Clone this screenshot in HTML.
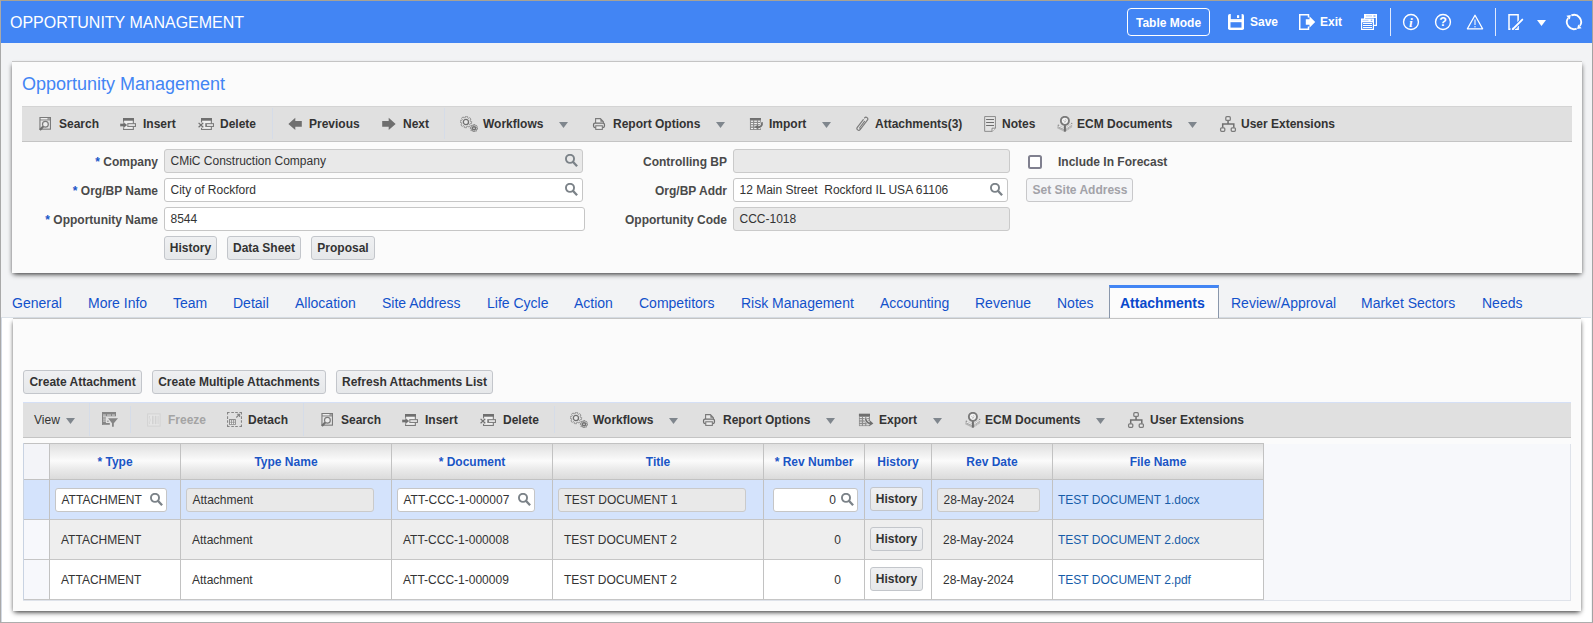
<!DOCTYPE html>
<html lang="en">
<head>
<meta charset="utf-8">
<title>Opportunity Management</title>
<style>
*{box-sizing:border-box;margin:0;padding:0}
html,body{width:1593px;height:623px;overflow:hidden}
body{position:relative;background:#f2f3f5;font-family:"Liberation Sans",sans-serif;font-size:12px;color:#333}
.abs{position:absolute}
#frame{position:absolute;left:0;top:0;width:1593px;height:623px;border-left:1px solid #a9a9a9;border-top:1px solid #a8a294;border-right:1px solid #a3a3a3;border-bottom:1px solid #adadad;pointer-events:none;z-index:50}
#hdr{position:absolute;left:0;top:0;width:1593px;height:43px;background:#4285f4;color:#fff}
#hdr .ttl{position:absolute;left:10px;top:14px;font-size:16px;line-height:18px;white-space:nowrap}
.hb{position:absolute;font-weight:bold;font-size:12px;line-height:14px;color:#fff;white-space:nowrap}
.panel{position:absolute;background:#fbfbfb;border-top:1px solid #c4c4c4;box-shadow:0 3px 5px -1px rgba(0,0,0,.45),-2px 2px 4px -2px rgba(0,0,0,.35),2px 2px 4px -2px rgba(0,0,0,.35)}
.tb{position:absolute;background:#e0e0e0;height:36px;border-bottom:1px solid #c4c4c4;border-top:1px solid #d4d4d4}
.t{position:absolute;line-height:14px;font-size:12px;white-space:nowrap;color:#333}
b.t{font-weight:bold}
.sep{position:absolute;width:1px;background:#d5dce8}
.lbl{position:absolute;font-weight:bold;font-size:12px;line-height:14px;text-align:right;white-space:nowrap;color:#4a4a4a}
.lbl i{font-style:normal;color:#1a56c8}
.fld{position:absolute;height:24px;border:1px solid #c6c6c6;border-radius:3px;background:#fff;font-size:12px;line-height:23px;padding-left:5.5px;white-space:pre;color:#333;overflow:hidden}
.fld.ro{background:#e9e9e9;border-color:#cacaca}
.btn{position:absolute;height:24px;border:1px solid #c3c6cb;border-radius:3px;background:linear-gradient(#eff0f2,#e6e8ea);font-weight:bold;font-size:12px;line-height:23px;text-align:center;white-space:nowrap;color:#333}
.btn.dis{color:#a2a2a8;background:#f4f5f7;border-color:#c8c8ca;padding-left:1px}
.tab{position:absolute;top:295px;font-size:14px;line-height:16px;color:#1251cb;white-space:nowrap}
.th{position:absolute;top:443px;height:37px;border:1px solid #c2c2c2;border-left:none;background:linear-gradient(#dfdfdf 0%,#ececec 22%,#fbfbfb 48%,#eaeaea 72%,#dbdbdb 100%);font-weight:bold;font-size:12px;line-height:36px;text-align:center;color:#1a55c5;white-space:nowrap}
.td{position:absolute;height:40px;border-right:1px solid #c2c2c2;border-bottom:1px solid #c6c6c6;font-size:12px;line-height:41px;padding-left:11px;white-space:nowrap;color:#333}
.lnk{color:#165ca8}
</style>
</head>
<body>

<div id="hdr"><div class="ttl">OPPORTUNITY MANAGEMENT</div>
<div class="abs" style="left:1127px;top:8px;width:83px;height:28px;border:1px solid #fff;border-radius:4px"></div>
<div class="hb" style="left:1136px;top:16px">Table Mode</div>
<svg class="abs" style="left:1228px;top:14px" width="16" height="16" viewBox="0 0 16 16" ><rect x="0" y="0" width="16" height="16" rx="1.8" fill="#fff"/><rect x="2.8" y="0" width="10.8" height="5" fill="#4285f4"/><rect x="9" y="1.2" width="2.2" height="2.8" fill="#fff"/><rect x="2.8" y="5" width="10.8" height="1.4" fill="#e4edfd"/><rect x="2.5" y="8.2" width="11" height="5.4" fill="#4285f4"/></svg>
<div class="hb" style="left:1250px;top:15px">Save</div>
<svg class="abs" style="left:1299px;top:14px" width="17" height="16" viewBox="0 0 17 16" ><path d="M9.5 3.5V0.75H0.75v14.5H9.5V12.5" fill="none" stroke="#fff" stroke-width="1.5"/><path d="M6.8 5.3h3.7V2.2l5.7 5.8-5.7 5.8V10.7H6.8z" fill="#fff"/></svg>
<div class="hb" style="left:1320px;top:15px">Exit</div>
<svg class="abs" style="left:1361px;top:14px" width="16" height="16" viewBox="0 0 16 16" ><rect x="3.6" y="0.6" width="11.8" height="10.8" fill="#4285f4" stroke="#fff" stroke-width="1.2"/><rect x="3" y="0" width="13" height="4" fill="#fff"/><rect x="5" y="1.3" width="6" height="1.2" fill="#bcd3fb"/><rect x="12.5" y="1" width="2" height="2" fill="#a9c6fa"/><rect x="0.6" y="5.3" width="11.8" height="10.1" fill="#4285f4" stroke="#fff" stroke-width="1.2"/><rect x="0" y="4.7" width="13" height="3.6" fill="#fff"/><rect x="1.5" y="5.8" width="6" height="1.1" fill="#bcd3fb"/><rect x="9.8" y="5.6" width="1.5" height="1.5" fill="#8ab1f8"/><path d="M2 9.5h9M2 11.5h9M2 13.5h9" stroke="#fff" stroke-width="1"/></svg>
<div class="abs" style="left:1390px;top:8px;width:1px;height:28px;background:#dfe9fd"></div>
<svg class="abs" style="left:1402px;top:13px" width="18" height="18" viewBox="0 0 18 18" ><circle cx="9" cy="9" r="7.45" fill="none" stroke="#fff" stroke-width="1.4"/><text x="9" y="13.6" text-anchor="middle" font-family="Liberation Serif,serif" font-style="italic" font-weight="bold" font-size="13.5" fill="#fff">i</text></svg>
<svg class="abs" style="left:1434px;top:13px" width="18" height="18" viewBox="0 0 18 18" ><circle cx="9" cy="9" r="7.45" fill="none" stroke="#fff" stroke-width="1.4"/><text x="9" y="13.4" text-anchor="middle" font-family="Liberation Sans,sans-serif" font-weight="bold" font-size="12.5" fill="#fff">?</text></svg>
<svg class="abs" style="left:1466px;top:14px" width="18" height="16" viewBox="0 0 18 16" ><path d="M9 1.2L16.6 14.8H1.4z" fill="none" stroke="#fff" stroke-width="1.3" stroke-linejoin="round"/><path d="M9 5.5v5.5" stroke="#fff" stroke-width="1.3" opacity=".85"/><circle cx="9" cy="12.7" r="0.8" fill="#fff" opacity=".85"/></svg>
<div class="abs" style="left:1495px;top:8px;width:1px;height:28px;background:#dfe9fd"></div>
<svg class="abs" style="left:1508px;top:14px" width="16" height="16" viewBox="0 0 16 16" ><path d="M10.1 8V0.75H1V15.15H4.2M6.8 15.15H10.1V12" fill="none" stroke="#fff" stroke-width="1.5"/><path d="M14.3 5.6L4.3 15.6" stroke="#4285f4" stroke-width="3.6" stroke-linecap="round"/><path d="M14.3 5.6L5.3 14.6" stroke="#fff" stroke-width="1.9" stroke-linecap="round"/><path d="M3.8 16.1l0.7-2.5 1.8 1.8z" fill="#fff"/></svg>
<svg class="abs" style="left:1537px;top:20px" width="9" height="6" viewBox="0 0 9 6" ><path d="M0 0h9L4.5 6z" fill="#fff"/></svg>
<svg class="abs" style="left:1565px;top:13px" width="18" height="18" viewBox="0 0 18 18" ><path d="M11.66 15.58A7.1 7.1 0 0 1 3.18 4.93M6.34 2.42A7.1 7.1 0 0 1 14.82 13.07" fill="none" stroke="#fff" stroke-width="1.8"/><path d="M1.4 2.65L5.9 2.1 4.8 6.6z" fill="#fff"/><path d="M16.6 15.35L12.1 15.9 13.2 11.4z" fill="#fff"/></svg>
</div>
<div class="panel" style="left:12px;top:61px;width:1570px;height:212px"></div>
<div class="abs" style="left:22px;top:73px;font-size:18px;line-height:22px;color:#4285f4;white-space:nowrap">Opportunity Management</div>
<div class="tb" style="left:22px;top:106px;width:1550px"></div>
<svg class="abs" style="left:38px;top:116px" width="14" height="15" viewBox="0 0 14 15" ><rect x="1.95" y="1.55" width="10.5" height="11.6" fill="#e4e4e4" stroke="#7a7a7a" stroke-width="1.1"/><line x1="2" y1="3.9" x2="12.5" y2="3.9" stroke="#7a7a7a" stroke-width="1"/><rect x="3" y="2.3" width="6" height="0.9" fill="#f6f6f6"/><rect x="9.6" y="2.2" width="2.3" height="1.2" fill="#8c8c8c"/><circle cx="7.4" cy="8.3" r="2.9" fill="#ececec" stroke="#7a7a7a" stroke-width="1.2"/><line x1="5.2" y1="10.6" x2="1.9" y2="14" stroke="#6f6f6f" stroke-width="2.2"/></svg><b class="t" style="left:59px;top:117px">Search</b>
<svg class="abs" style="left:120px;top:118px" width="16" height="12" viewBox="0 0 16 12" ><rect x="3.55" y="0.55" width="9.8" height="10.9" fill="#efefef" stroke="#7a7a7a" stroke-width="1.1"/><rect x="3" y="0" width="10.9" height="2.7" fill="#6f6f6f"/><rect x="7.8" y="5.7" width="7.7" height="2.7" fill="#f2f2f2" stroke="#7a7a7a" stroke-width="1.1"/><path d="M0 5.5h3.3V3.9L7.4 7.05 3.3 10.2V8.6H0z" fill="#6f6f6f" stroke="#e0e0e0" stroke-width="0.4"/></svg><b class="t" style="left:143px;top:117px">Insert</b>
<svg class="abs" style="left:198px;top:118px" width="16" height="12" viewBox="0 0 16 12" ><rect x="3.55" y="0.55" width="9.8" height="10.9" fill="#efefef" stroke="#7a7a7a" stroke-width="1.1"/><rect x="3" y="0" width="10.9" height="2.7" fill="#6f6f6f"/><rect x="7.8" y="5.7" width="7.7" height="2.7" fill="#f2f2f2" stroke="#7a7a7a" stroke-width="1.1"/><rect x="2.5" y="4.4" width="3.6" height="5.4" fill="#e0e0e0"/><path d="M0.6 4.9l4.6 4.4M5.2 4.9l-4.6 4.4" stroke="#6f6f6f" stroke-width="1.2" fill="none"/><path d="M8.5 6.2v1.8" stroke="#7a7a7a" stroke-width="1"/></svg><b class="t" style="left:220px;top:117px">Delete</b>
<div class="sep" style="left:272px;top:108px;height:31px"></div>
<svg class="abs" style="left:288px;top:117px" width="15" height="14" viewBox="0 0 15 14" ><path d="M0.35 6.94L7.3 0.8V4.05H13.8V9.8H7.3V13.1z" fill="#6f6f6f"/></svg><b class="t" style="left:309px;top:117px">Previous</b>
<svg class="abs" style="left:381px;top:117px" width="16" height="14" viewBox="0 0 16 14" ><path d="M14.65 6.94L7.7 0.8V4.05H1.2V9.8H7.7V13.1z" fill="#6f6f6f"/></svg><b class="t" style="left:403px;top:117px">Next</b>
<div class="sep" style="left:444px;top:108px;height:31px"></div>
<svg class="abs" style="left:460px;top:116px" width="18" height="16" viewBox="0 0 18 16" ><path d="M11.71 5.43 L11.49 7.68 L10.34 7.34 L9.5 8.92 L10.42 9.68 L8.67 11.12 L8.11 10.06 L6.39 10.58 L6.51 11.77 L4.26 11.55 L4.6 10.4 L3.02 9.56 L2.26 10.48 L0.82 8.73 L1.88 8.17 L1.36 6.45 L0.17 6.57 L0.39 4.32 L1.54 4.66 L2.38 3.08 L1.46 2.32 L3.21 0.88 L3.77 1.94 L5.49 1.42 L5.37 0.23 L7.62 0.45 L7.28 1.6 L8.86 2.44 L9.62 1.52 L11.06 3.27 L10 3.83 L10.52 5.55Z" fill="#e3e3e3" stroke="#8a8a8a" stroke-width="0.8" stroke-linejoin="round"/><circle cx="5.94" cy="6" r="2.6" fill="#e8e8e8" stroke="#6f6f6f" stroke-width="1.3"/><path d="M17.68 11.84 L17.54 13.27 L16.68 13.01 L16.16 13.98 L16.86 14.55 L15.74 15.46 L15.32 14.67 L14.27 14.99 L14.36 15.88 L12.93 15.74 L13.19 14.88 L12.22 14.36 L11.65 15.06 L10.74 13.94 L11.53 13.52 L11.21 12.47 L10.32 12.56 L10.46 11.13 L11.32 11.39 L11.84 10.42 L11.14 9.85 L12.26 8.94 L12.68 9.73 L13.73 9.41 L13.64 8.52 L15.07 8.66 L14.81 9.52 L15.78 10.04 L16.35 9.34 L17.26 10.46 L16.47 10.88 L16.79 11.93Z" fill="#e3e3e3" stroke="#7a7a7a" stroke-width="0.8" stroke-linejoin="round"/><circle cx="14" cy="12.2" r="1.5" fill="#f6f6f6" stroke="#6f6f6f" stroke-width="1.5"/></svg><b class="t" style="left:483px;top:117px">Workflows</b><svg class="abs" style="left:559px;top:122px" width="9" height="6" viewBox="0 0 9 6"><path d="M0 0h9L4.5 6z" fill="#7f868d"/></svg>
<svg class="abs" style="left:592px;top:118px" width="14" height="12" viewBox="0 0 14 12" ><path d="M3.6 5V0.6H8.4L11.4 3.8V5" fill="#e9e9e9" stroke="#7a7a7a" stroke-width="1.1"/><path d="M8.4 0.6V3.8H11.4z" fill="#7a7a7a"/><rect x="1.55" y="5.2" width="10.9" height="4.3" rx="1.4" fill="#e0e0e0" stroke="#6f6f6f" stroke-width="1.25"/><rect x="3.75" y="7.8" width="6.6" height="3.6" fill="#eeeeee" stroke="#7a7a7a" stroke-width="1.1"/></svg><b class="t" style="left:613px;top:117px">Report Options</b><svg class="abs" style="left:716px;top:122px" width="9" height="6" viewBox="0 0 9 6"><path d="M0 0h9L4.5 6z" fill="#7f868d"/></svg>
<svg class="abs" style="left:749px;top:118px" width="15" height="13" viewBox="0 0 15 13" ><rect x="0.95" y="0" width="11" height="12" fill="#8c8c8c"/><rect x="0.95" y="0" width="11" height="1.8" fill="#6f6f6f"/><rect x="1.95" y="2.7" width="2.1" height="1.15" fill="#f4f4f4"/><rect x="5.2" y="2.7" width="2.7" height="1.15" fill="#f4f4f4"/><rect x="9.05" y="2.7" width="2.1" height="1.15" fill="#f4f4f4"/><rect x="1.95" y="5" width="2.1" height="1.15" fill="#f4f4f4"/><rect x="5.2" y="5" width="2.7" height="1.15" fill="#f4f4f4"/><rect x="9.05" y="5" width="2.1" height="1.15" fill="#f4f4f4"/><rect x="1.95" y="7.3" width="2.1" height="1.15" fill="#f4f4f4"/><rect x="5.2" y="7.3" width="2.7" height="1.15" fill="#f4f4f4"/><rect x="9.05" y="7.3" width="2.1" height="1.15" fill="#f4f4f4"/><rect x="1.95" y="9.9" width="2.1" height="1.15" fill="#f4f4f4"/><rect x="5.2" y="9.9" width="2.7" height="1.15" fill="#f4f4f4"/><rect x="9.05" y="9.9" width="2.1" height="1.15" fill="#f4f4f4"/><path d="M12.9 4.2C13.7 7.8 11.2 9.5 7.5 9.2" fill="none" stroke="#e0e0e0" stroke-width="3.4"/><path d="M12.9 4.2C13.7 7.8 11.2 9.5 8.5 9.2" fill="none" stroke="#6f6f6f" stroke-width="1.8"/><path d="M9.2 6.6L5.6 8.9 9.2 11.6z" fill="#6f6f6f"/></svg><b class="t" style="left:769px;top:117px">Import</b><svg class="abs" style="left:822px;top:122px" width="9" height="6" viewBox="0 0 9 6"><path d="M0 0h9L4.5 6z" fill="#7f868d"/></svg>
<svg class="abs" style="left:855px;top:116px" width="14" height="16" viewBox="0 0 14 16" ><path d="M9.61 1.93A1.75 1.75 0 0 1 12.39 4.07L5.09 13.57A1.75 1.75 0 0 1 2.31 11.43L8.3 3.65" fill="none" stroke="#7a7a7a" stroke-width="1.15" stroke-linecap="round"/><path d="M9.5 5.4L4.7 11.7A0.8 0.8 0 0 0 5.7 12.6" fill="none" stroke="#7a7a7a" stroke-width="1.05" stroke-linecap="round"/></svg><b class="t" style="left:875px;top:117px">Attachments(3)</b>
<svg class="abs" style="left:984px;top:116px" width="12" height="16" viewBox="0 0 12 16" ><path d="M0.65 0.55H11.45V12.2L8 15.35H0.65z" fill="#e4e4e4" stroke="#828282" stroke-width="0.9" stroke-linejoin="miter"/><path d="M8 15.35V12.2H11.45" fill="#f2f2f2" stroke="#828282" stroke-width="0.9"/><path d="M2.1 3.5h7.9M2.1 6.5h7.9M2.1 9.5h7.9" stroke="#6f6f6f" stroke-width="1.2" fill="none"/></svg><b class="t" style="left:1002px;top:117px">Notes</b>
<svg class="abs" style="left:1057px;top:116px" width="16" height="16" viewBox="0 0 16 16" ><path d="M0.2 12.3L1 9.1 7.9 12V15.9z" fill="#a6a6a6"/><path d="M7.9 12L15.1 7.1V11.3L7.9 15.9z" fill="#adadad"/><path d="M0.7 11.5L7.7 14.6M0.5 12.7L7.7 15.6" fill="none" stroke="#dadada" stroke-width="0.6" stroke-dasharray="1.2 0.9"/><path d="M8.2 14.3L15 9.9M8.2 15.3L15 10.9" fill="none" stroke="#dedede" stroke-width="0.6" stroke-dasharray="1.2 0.9"/><path d="M1.3 9.95L7.6 12.7" stroke="#f6f6f6" stroke-width="0.9"/><path d="M8.4 12.6L14.9 8.1" stroke="#f6f6f6" stroke-width="0.9"/><circle cx="1.3" cy="9.2" r="0.6" fill="#7a7a7a"/><circle cx="14.7" cy="7.3" r="0.6" fill="#7a7a7a"/><path d="M7.9 8.5V15.6" stroke="#6f6f6f" stroke-width="2"/><circle cx="7.9" cy="4.86" r="4.05" fill="#f3f3f3" stroke="#7a7a7a" stroke-width="1.9"/><path d="M6.6 4.3l1.2 1.2M8.3 3.6l1 0.8M7.4 6.2l1.4-0.6" stroke="#9a9a9a" stroke-width="0.8"/></svg><b class="t" style="left:1077px;top:117px">ECM Documents</b><svg class="abs" style="left:1188px;top:122px" width="9" height="6" viewBox="0 0 9 6"><path d="M0 0h9L4.5 6z" fill="#7f868d"/></svg>
<svg class="abs" style="left:1219px;top:116px" width="18" height="16" viewBox="0 0 18 16" ><rect x="6.8" y="0.65" width="4.5" height="3.8" rx="1" fill="#e8e8e8" stroke="#7a7a7a" stroke-width="1.25"/><rect x="1.6" y="11.8" width="4.2" height="3.5" rx="1" fill="#e8e8e8" stroke="#7a7a7a" stroke-width="1.25"/><rect x="12.2" y="11.8" width="4.2" height="3.5" rx="1" fill="#e8e8e8" stroke="#7a7a7a" stroke-width="1.25"/><path d="M9.05 5V7.5M3.7 11.4V7.95H14.8V11.4" fill="none" stroke="#6f6f6f" stroke-width="1.5"/></svg><b class="t" style="left:1241px;top:117px">User Extensions</b>
<div class="lbl" style="left:-42px;width:200px;top:155px"><i>* </i>Company</div>
<div class="lbl" style="left:-42px;width:200px;top:184px"><i>* </i>Org/BP Name</div>
<div class="lbl" style="left:-42px;width:200px;top:213px"><i>* </i>Opportunity Name</div>
<div class="fld ro" style="left:164px;top:149px;width:419px">CMiC Construction Company</div><svg class="abs" style="left:565px;top:154px" width="14" height="14" viewBox="0 0 14 14" ><circle cx="5" cy="4.85" r="4.05" fill="none" stroke="#7b8288" stroke-width="1.9"/><line x1="7.9" y1="7.8" x2="12.1" y2="12.2" stroke="#7b8288" stroke-width="2.3"/></svg>
<div class="fld" style="left:164px;top:178px;width:419px">City of Rockford</div><svg class="abs" style="left:565px;top:183px" width="14" height="14" viewBox="0 0 14 14" ><circle cx="5" cy="4.85" r="4.05" fill="none" stroke="#7b8288" stroke-width="1.9"/><line x1="7.9" y1="7.8" x2="12.1" y2="12.2" stroke="#7b8288" stroke-width="2.3"/></svg>
<div class="fld" style="left:164px;top:207px;width:421px">8544</div>
<div class="btn" style="left:164px;top:236px;width:53px">History</div>
<div class="btn" style="left:227px;top:236px;width:74px">Data Sheet</div>
<div class="btn" style="left:311px;top:236px;width:64px">Proposal</div>
<div class="lbl" style="left:527px;width:200px;top:155px">Controlling BP</div>
<div class="lbl" style="left:527px;width:200px;top:184px">Org/BP Addr</div>
<div class="lbl" style="left:527px;width:200px;top:213px">Opportunity Code</div>
<div class="fld ro" style="left:733px;top:149px;width:277px"></div>
<div class="fld" style="left:733px;top:178px;width:275px">12 Main Street  Rockford IL USA 61106</div><svg class="abs" style="left:990px;top:183px" width="14" height="14" viewBox="0 0 14 14" ><circle cx="5" cy="4.85" r="4.05" fill="none" stroke="#7b8288" stroke-width="1.9"/><line x1="7.9" y1="7.8" x2="12.1" y2="12.2" stroke="#7b8288" stroke-width="2.3"/></svg>
<div class="fld ro" style="left:733px;top:207px;width:277px">CCC-1018</div>
<div class="abs" style="left:1028px;top:155px;width:14px;height:14px;border:2px solid #80808f;border-radius:2.5px;background:#fff"></div>
<div class="lbl" style="left:1058px;top:155px;text-align:left">Include In Forecast</div>
<div class="btn dis" style="left:1026px;top:178px;width:107px">Set Site Address</div>
<div class="abs" style="left:1px;top:317px;width:1590px;height:305px;background:#fff;border-top:1px solid #dbe1e8;border-left:1px solid #d3dae4"></div>
<div class="tab" style="left:12px">General</div>
<div class="tab" style="left:88px">More Info</div>
<div class="tab" style="left:173px">Team</div>
<div class="tab" style="left:233px">Detail</div>
<div class="tab" style="left:295px">Allocation</div>
<div class="tab" style="left:382px">Site Address</div>
<div class="tab" style="left:487px">Life Cycle</div>
<div class="tab" style="left:574px">Action</div>
<div class="tab" style="left:639px">Competitors</div>
<div class="tab" style="left:741px">Risk Management</div>
<div class="tab" style="left:880px">Accounting</div>
<div class="tab" style="left:975px">Revenue</div>
<div class="tab" style="left:1057px">Notes</div>
<div class="tab" style="left:1231px">Review/Approval</div>
<div class="tab" style="left:1361px">Market Sectors</div>
<div class="tab" style="left:1482px">Needs</div>
<div class="abs" style="left:1109px;top:285px;width:110px;height:34px;background:#fcfcfc;border:1px solid #8a97ab;border-top:3px solid #4285f4;border-bottom:none"></div>
<div class="tab" style="left:1120px;font-weight:bold;color:#0a49cc">Attachments</div>
<div class="panel" style="left:13px;top:318px;width:1568px;height:293px"></div>
<div class="btn" style="left:23px;top:370px;width:119px">Create Attachment</div>
<div class="btn" style="left:152px;top:370px;width:174px">Create Multiple Attachments</div>
<div class="btn" style="left:336px;top:370px;width:157px">Refresh Attachments List</div>
<div class="tb" style="left:23px;top:402px;width:1548px;border-top:1px solid #d5e0f6"></div>
<span class="t" style="left:34px;top:413px">View</span><svg class="abs" style="left:66px;top:418px" width="9" height="6" viewBox="0 0 9 6"><path d="M0 0h9L4.5 6z" fill="#7f868d"/></svg>
<div class="sep" style="left:89px;top:403px;height:33px"></div>
<svg class="abs" style="left:102px;top:412px" width="16" height="15" viewBox="0 0 16 15" ><rect x="0" y="0" width="14" height="4.3" fill="#858585"/><rect x="1" y="2.6" width="2.9" height="0.9" fill="#e6e6e6"/><rect x="5" y="2.6" width="4" height="0.9" fill="#e6e6e6"/><rect x="10" y="2.6" width="2.9" height="0.9" fill="#e6e6e6"/><rect x="0" y="0" width="1" height="12.8" fill="#858585"/><rect x="0" y="5.4" width="3.9" height="1.2" fill="#858585"/><rect x="0" y="7.5" width="3.9" height="1.1" fill="#858585"/><rect x="0" y="9.5" width="3.9" height="1.5" fill="#858585"/><rect x="5" y="8.7" width="1.8" height="0.9" fill="#858585"/><rect x="0" y="11" width="7.8" height="1.8" fill="#858585"/><path d="M6.1 6.2H16L11.8 11.3V14.8H10V11.3z" fill="#858585"/></svg>
<div class="sep" style="left:130px;top:406px;height:27px"></div>
<svg class="abs" style="left:147px;top:413px" width="14" height="14" viewBox="0 0 14 14" ><rect x="0.7" y="0.9" width="12.4" height="12.2" fill="#e5e5e5" stroke="#d2d2d2" stroke-width="1"/><rect x="5" y="2.8" width="1.6" height="8.4" fill="#d2d2d2"/><rect x="7.8" y="2.8" width="1.6" height="8.4" fill="#d2d2d2"/><rect x="10.6" y="2.8" width="1" height="8.4" fill="#d2d2d2"/><path d="M2.8 2.8q-1 1.4 0 2.8t0 2.8 0 2.8" fill="none" stroke="#d2d2d2" stroke-width="0.9"/></svg><b class="t" style="left:168px;top:413px;color:#a4a4a4">Freeze</b>
<svg class="abs" style="left:227px;top:412px" width="15" height="15" viewBox="0 0 15 15" ><path d="M0 0.55H2.6M0 14.45H2.6M0.55 0V2.6M14.45 0V2.6M4.3 0.55H6.9M4.3 14.45H6.9M0.55 4.3V6.9M14.45 4.3V6.9M8.2 0.55H10.8M8.2 14.45H10.8M0.55 8.2V10.8M14.45 8.2V10.8M12.4 0.55H15M12.4 14.45H15M0.55 12.4V15M14.45 12.4V15" fill="none" stroke="#858585" stroke-width="1.1"/><rect x="2" y="7.1" width="6.8" height="5.7" fill="#858585"/><rect x="2.9" y="8.2" width="1.2" height="1.6" fill="#f2f2f2"/><rect x="4.8" y="8.2" width="1.2" height="1.6" fill="#f2f2f2"/><rect x="6.7" y="8.2" width="1.2" height="1.6" fill="#f2f2f2"/><rect x="2.9" y="10.5" width="1.2" height="1.6" fill="#f2f2f2"/><rect x="4.8" y="10.5" width="1.2" height="1.6" fill="#f2f2f2"/><rect x="6.7" y="10.5" width="1.2" height="1.6" fill="#f2f2f2"/><path d="M9.3 5.5l3-3M9.9 2.3h2.7V5" fill="none" stroke="#858585" stroke-width="1.1"/></svg><b class="t" style="left:248px;top:413px">Detach</b>
<div class="sep" style="left:303px;top:403px;height:33px"></div>
<svg class="abs" style="left:320px;top:412px" width="14" height="15" viewBox="0 0 14 15" ><rect x="1.95" y="1.55" width="10.5" height="11.6" fill="#e4e4e4" stroke="#7a7a7a" stroke-width="1.1"/><line x1="2" y1="3.9" x2="12.5" y2="3.9" stroke="#7a7a7a" stroke-width="1"/><rect x="3" y="2.3" width="6" height="0.9" fill="#f6f6f6"/><rect x="9.6" y="2.2" width="2.3" height="1.2" fill="#8c8c8c"/><circle cx="7.4" cy="8.3" r="2.9" fill="#ececec" stroke="#7a7a7a" stroke-width="1.2"/><line x1="5.2" y1="10.6" x2="1.9" y2="14" stroke="#6f6f6f" stroke-width="2.2"/></svg><b class="t" style="left:341px;top:413px">Search</b>
<svg class="abs" style="left:402px;top:414px" width="16" height="12" viewBox="0 0 16 12" ><rect x="3.55" y="0.55" width="9.8" height="10.9" fill="#efefef" stroke="#7a7a7a" stroke-width="1.1"/><rect x="3" y="0" width="10.9" height="2.7" fill="#6f6f6f"/><rect x="7.8" y="5.7" width="7.7" height="2.7" fill="#f2f2f2" stroke="#7a7a7a" stroke-width="1.1"/><path d="M0 5.5h3.3V3.9L7.4 7.05 3.3 10.2V8.6H0z" fill="#6f6f6f" stroke="#e0e0e0" stroke-width="0.4"/></svg><b class="t" style="left:425px;top:413px">Insert</b>
<svg class="abs" style="left:480px;top:414px" width="16" height="12" viewBox="0 0 16 12" ><rect x="3.55" y="0.55" width="9.8" height="10.9" fill="#efefef" stroke="#7a7a7a" stroke-width="1.1"/><rect x="3" y="0" width="10.9" height="2.7" fill="#6f6f6f"/><rect x="7.8" y="5.7" width="7.7" height="2.7" fill="#f2f2f2" stroke="#7a7a7a" stroke-width="1.1"/><rect x="2.5" y="4.4" width="3.6" height="5.4" fill="#e0e0e0"/><path d="M0.6 4.9l4.6 4.4M5.2 4.9l-4.6 4.4" stroke="#6f6f6f" stroke-width="1.2" fill="none"/><path d="M8.5 6.2v1.8" stroke="#7a7a7a" stroke-width="1"/></svg><b class="t" style="left:503px;top:413px">Delete</b>
<div class="sep" style="left:554px;top:406px;height:27px"></div>
<svg class="abs" style="left:570px;top:412px" width="18" height="16" viewBox="0 0 18 16" ><path d="M11.71 5.43 L11.49 7.68 L10.34 7.34 L9.5 8.92 L10.42 9.68 L8.67 11.12 L8.11 10.06 L6.39 10.58 L6.51 11.77 L4.26 11.55 L4.6 10.4 L3.02 9.56 L2.26 10.48 L0.82 8.73 L1.88 8.17 L1.36 6.45 L0.17 6.57 L0.39 4.32 L1.54 4.66 L2.38 3.08 L1.46 2.32 L3.21 0.88 L3.77 1.94 L5.49 1.42 L5.37 0.23 L7.62 0.45 L7.28 1.6 L8.86 2.44 L9.62 1.52 L11.06 3.27 L10 3.83 L10.52 5.55Z" fill="#e3e3e3" stroke="#8a8a8a" stroke-width="0.8" stroke-linejoin="round"/><circle cx="5.94" cy="6" r="2.6" fill="#e8e8e8" stroke="#6f6f6f" stroke-width="1.3"/><path d="M17.68 11.84 L17.54 13.27 L16.68 13.01 L16.16 13.98 L16.86 14.55 L15.74 15.46 L15.32 14.67 L14.27 14.99 L14.36 15.88 L12.93 15.74 L13.19 14.88 L12.22 14.36 L11.65 15.06 L10.74 13.94 L11.53 13.52 L11.21 12.47 L10.32 12.56 L10.46 11.13 L11.32 11.39 L11.84 10.42 L11.14 9.85 L12.26 8.94 L12.68 9.73 L13.73 9.41 L13.64 8.52 L15.07 8.66 L14.81 9.52 L15.78 10.04 L16.35 9.34 L17.26 10.46 L16.47 10.88 L16.79 11.93Z" fill="#e3e3e3" stroke="#7a7a7a" stroke-width="0.8" stroke-linejoin="round"/><circle cx="14" cy="12.2" r="1.5" fill="#f6f6f6" stroke="#6f6f6f" stroke-width="1.5"/></svg><b class="t" style="left:593px;top:413px">Workflows</b><svg class="abs" style="left:669px;top:418px" width="9" height="6" viewBox="0 0 9 6"><path d="M0 0h9L4.5 6z" fill="#7f868d"/></svg>
<svg class="abs" style="left:702px;top:414px" width="14" height="12" viewBox="0 0 14 12" ><path d="M3.6 5V0.6H8.4L11.4 3.8V5" fill="#e9e9e9" stroke="#7a7a7a" stroke-width="1.1"/><path d="M8.4 0.6V3.8H11.4z" fill="#7a7a7a"/><rect x="1.55" y="5.2" width="10.9" height="4.3" rx="1.4" fill="#e0e0e0" stroke="#6f6f6f" stroke-width="1.25"/><rect x="3.75" y="7.8" width="6.6" height="3.6" fill="#eeeeee" stroke="#7a7a7a" stroke-width="1.1"/></svg><b class="t" style="left:723px;top:413px">Report Options</b><svg class="abs" style="left:826px;top:418px" width="9" height="6" viewBox="0 0 9 6"><path d="M0 0h9L4.5 6z" fill="#7f868d"/></svg>
<svg class="abs" style="left:858px;top:413px" width="16" height="14" viewBox="0 0 16 14" ><rect x="0.95" y="0.8" width="11.05" height="12.3" fill="#8c8c8c"/><rect x="0.95" y="0.8" width="11.05" height="2.2" fill="#6f6f6f"/><rect x="1.7" y="4.1" width="2.2" height="0.95" fill="#f4f4f4"/><rect x="5" y="4.1" width="2.2" height="0.95" fill="#f4f4f4"/><rect x="8.3" y="4.1" width="2.6" height="0.95" fill="#f4f4f4"/><rect x="1.7" y="6.3" width="2.2" height="0.95" fill="#f4f4f4"/><rect x="5" y="6.3" width="2.2" height="0.95" fill="#f4f4f4"/><rect x="8.3" y="6.3" width="2.6" height="0.95" fill="#f4f4f4"/><rect x="1.7" y="8.7" width="2.2" height="0.95" fill="#f4f4f4"/><rect x="5" y="8.7" width="2.2" height="0.95" fill="#f4f4f4"/><rect x="8.3" y="8.7" width="2.6" height="0.95" fill="#f4f4f4"/><rect x="1.7" y="11.3" width="2.2" height="0.95" fill="#f4f4f4"/><rect x="5" y="11.3" width="2.2" height="0.95" fill="#f4f4f4"/><rect x="8.3" y="11.3" width="2.6" height="0.95" fill="#f4f4f4"/><path d="M7.6 5.4C8 8.8 9.8 10.2 12.8 10.4" fill="none" stroke="#e0e0e0" stroke-width="3.2"/><path d="M7.6 5.4C8 8.8 9.8 10.2 12.5 10.4" fill="none" stroke="#6f6f6f" stroke-width="1.6"/><path d="M12 7.5L15.4 10.5 11.6 13.1z" fill="#6f6f6f"/></svg><b class="t" style="left:879px;top:413px">Export</b><svg class="abs" style="left:933px;top:418px" width="9" height="6" viewBox="0 0 9 6"><path d="M0 0h9L4.5 6z" fill="#7f868d"/></svg>
<svg class="abs" style="left:965px;top:412px" width="16" height="16" viewBox="0 0 16 16" ><path d="M0.2 12.3L1 9.1 7.9 12V15.9z" fill="#a6a6a6"/><path d="M7.9 12L15.1 7.1V11.3L7.9 15.9z" fill="#adadad"/><path d="M0.7 11.5L7.7 14.6M0.5 12.7L7.7 15.6" fill="none" stroke="#dadada" stroke-width="0.6" stroke-dasharray="1.2 0.9"/><path d="M8.2 14.3L15 9.9M8.2 15.3L15 10.9" fill="none" stroke="#dedede" stroke-width="0.6" stroke-dasharray="1.2 0.9"/><path d="M1.3 9.95L7.6 12.7" stroke="#f6f6f6" stroke-width="0.9"/><path d="M8.4 12.6L14.9 8.1" stroke="#f6f6f6" stroke-width="0.9"/><circle cx="1.3" cy="9.2" r="0.6" fill="#7a7a7a"/><circle cx="14.7" cy="7.3" r="0.6" fill="#7a7a7a"/><path d="M7.9 8.5V15.6" stroke="#6f6f6f" stroke-width="2"/><circle cx="7.9" cy="4.86" r="4.05" fill="#f3f3f3" stroke="#7a7a7a" stroke-width="1.9"/><path d="M6.6 4.3l1.2 1.2M8.3 3.6l1 0.8M7.4 6.2l1.4-0.6" stroke="#9a9a9a" stroke-width="0.8"/></svg><b class="t" style="left:985px;top:413px">ECM Documents</b><svg class="abs" style="left:1096px;top:418px" width="9" height="6" viewBox="0 0 9 6"><path d="M0 0h9L4.5 6z" fill="#7f868d"/></svg>
<svg class="abs" style="left:1127px;top:412px" width="18" height="16" viewBox="0 0 18 16" ><rect x="6.8" y="0.65" width="4.5" height="3.8" rx="1" fill="#e8e8e8" stroke="#7a7a7a" stroke-width="1.25"/><rect x="1.6" y="11.8" width="4.2" height="3.5" rx="1" fill="#e8e8e8" stroke="#7a7a7a" stroke-width="1.25"/><rect x="12.2" y="11.8" width="4.2" height="3.5" rx="1" fill="#e8e8e8" stroke="#7a7a7a" stroke-width="1.25"/><path d="M9.05 5V7.5M3.7 11.4V7.95H14.8V11.4" fill="none" stroke="#6f6f6f" stroke-width="1.5"/></svg><b class="t" style="left:1150px;top:413px">User Extensions</b>
<div class="abs" style="left:23px;top:444px;width:1548px;height:157px;background:#f7f8fb;border:1px solid #dfe3ea;border-left:none;border-top:none"></div>
<div class="abs" style="left:23px;top:443px;width:1px;height:157px;background:#c9d3e2"></div>
<div class="th" style="left:24px;width:26px;background:#f3f4f8"></div>
<div class="th" style="left:50px;width:131px">* Type</div>
<div class="th" style="left:181px;width:211px">Type Name</div>
<div class="th" style="left:392px;width:161px">* Document</div>
<div class="th" style="left:553px;width:211px">Title</div>
<div class="th" style="left:764px;width:101px">* Rev Number</div>
<div class="th" style="left:865px;width:67px">History</div>
<div class="th" style="left:932px;width:121px">Rev Date</div>
<div class="th" style="left:1053px;width:211px">File Name</div>
<div class="td" style="left:24px;top:480px;width:26px;background:#d4e3fc"></div>
<div class="td" style="left:50px;top:480px;width:131px;background:#d4e3fc"></div>
<div class="td" style="left:181px;top:480px;width:211px;background:#d4e3fc"></div>
<div class="td" style="left:392px;top:480px;width:161px;background:#d4e3fc"></div>
<div class="td" style="left:553px;top:480px;width:211px;background:#d4e3fc"></div>
<div class="td" style="left:764px;top:480px;width:101px;background:#d4e3fc;text-align:right;padding-right:23px"></div>
<div class="td" style="left:865px;top:480px;width:67px;background:#d4e3fc"></div>
<div class="td" style="left:932px;top:480px;width:121px;background:#d4e3fc"></div>
<div class="td lnk" style="left:1053px;top:480px;width:211px;background:#d4e3fc;padding-left:5px">TEST DOCUMENT 1.docx</div>
<div class="btn" style="left:870px;top:487px;width:53px">History</div>
<div class="td" style="left:24px;top:520px;width:26px;background:#f7f8fc"></div>
<div class="td" style="left:50px;top:520px;width:131px;background:#eeeeee">ATTACHMENT</div>
<div class="td" style="left:181px;top:520px;width:211px;background:#eeeeee">Attachment</div>
<div class="td" style="left:392px;top:520px;width:161px;background:#eeeeee">ATT-CCC-1-000008</div>
<div class="td" style="left:553px;top:520px;width:211px;background:#eeeeee">TEST DOCUMENT 2</div>
<div class="td" style="left:764px;top:520px;width:101px;background:#eeeeee;text-align:right;padding-right:23px">0</div>
<div class="td" style="left:865px;top:520px;width:67px;background:#eeeeee"></div>
<div class="td" style="left:932px;top:520px;width:121px;background:#eeeeee">28-May-2024</div>
<div class="td lnk" style="left:1053px;top:520px;width:211px;background:#eeeeee;padding-left:5px">TEST DOCUMENT 2.docx</div>
<div class="btn" style="left:870px;top:527px;width:53px">History</div>
<div class="td" style="left:24px;top:560px;width:26px;background:#f7f8fc"></div>
<div class="td" style="left:50px;top:560px;width:131px;background:#ffffff">ATTACHMENT</div>
<div class="td" style="left:181px;top:560px;width:211px;background:#ffffff">Attachment</div>
<div class="td" style="left:392px;top:560px;width:161px;background:#ffffff">ATT-CCC-1-000009</div>
<div class="td" style="left:553px;top:560px;width:211px;background:#ffffff">TEST DOCUMENT 2</div>
<div class="td" style="left:764px;top:560px;width:101px;background:#ffffff;text-align:right;padding-right:23px">0</div>
<div class="td" style="left:865px;top:560px;width:67px;background:#ffffff"></div>
<div class="td" style="left:932px;top:560px;width:121px;background:#ffffff">28-May-2024</div>
<div class="td lnk" style="left:1053px;top:560px;width:211px;background:#ffffff;padding-left:5px">TEST DOCUMENT 2.pdf</div>
<div class="btn" style="left:870px;top:567px;width:53px">History</div>
<div class="fld" style="left:55px;top:488px;width:112px">ATTACHMENT</div><svg class="abs" style="left:150px;top:493px" width="14" height="14" viewBox="0 0 14 14" ><circle cx="5" cy="4.85" r="4.05" fill="none" stroke="#7b8288" stroke-width="1.9"/><line x1="7.9" y1="7.8" x2="12.1" y2="12.2" stroke="#7b8288" stroke-width="2.3"/></svg>
<div class="fld ro" style="left:186px;top:488px;width:188px">Attachment</div>
<div class="fld" style="left:397px;top:488px;width:138px">ATT-CCC-1-000007</div><svg class="abs" style="left:518px;top:493px" width="14" height="14" viewBox="0 0 14 14" ><circle cx="5" cy="4.85" r="4.05" fill="none" stroke="#7b8288" stroke-width="1.9"/><line x1="7.9" y1="7.8" x2="12.1" y2="12.2" stroke="#7b8288" stroke-width="2.3"/></svg>
<div class="fld ro" style="left:558px;top:488px;width:188px">TEST DOCUMENT 1</div>
<div class="fld" style="left:773px;top:488px;width:85px;text-align:right;padding-right:21px">0</div><svg class="abs" style="left:841px;top:493px" width="14" height="14" viewBox="0 0 14 14" ><circle cx="5" cy="4.85" r="4.05" fill="none" stroke="#7b8288" stroke-width="1.9"/><line x1="7.9" y1="7.8" x2="12.1" y2="12.2" stroke="#7b8288" stroke-width="2.3"/></svg>
<div class="fld ro" style="left:937px;top:488px;width:103px">28-May-2024</div>
<div id="frame"></div>
</body>
</html>
